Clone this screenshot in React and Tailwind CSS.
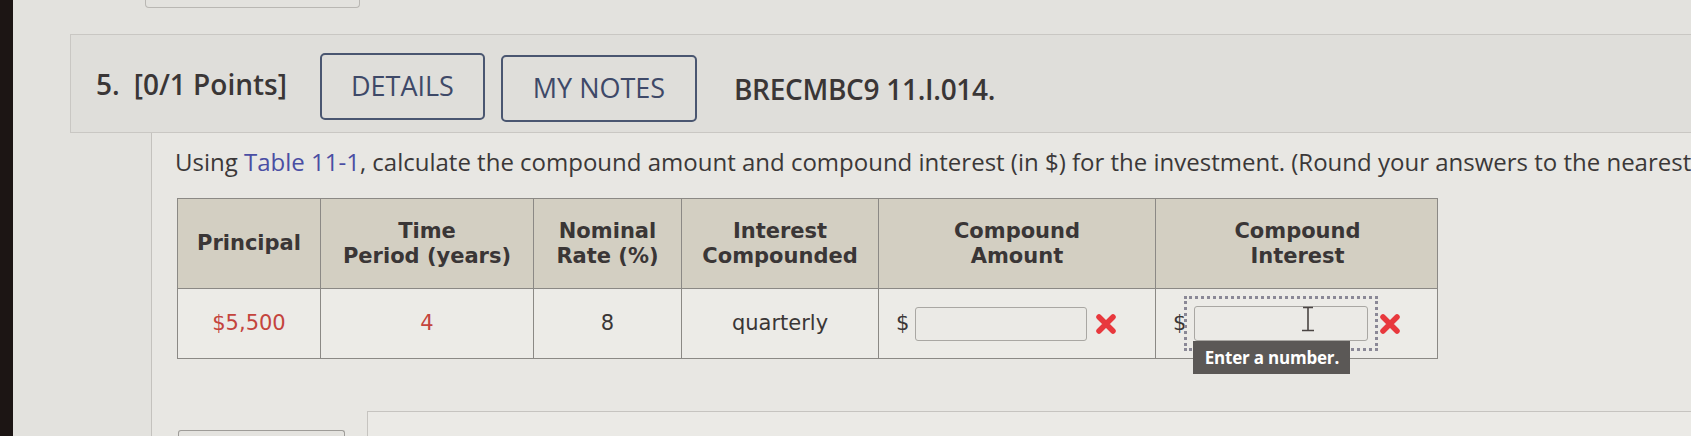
import React from 'react';

const RedX = () => (
    <svg width="24" height="24" viewBox="0 0 24 24" className="shrink-0">
        <path d="M5 5 L19 19 M19 5 L5 19" stroke="#e8383d" strokeWidth="5.5" strokeLinecap="round" />
    </svg>
);

const IBeam = () => (
    <svg width="14" height="26" viewBox="0 0 14 26" className="absolute left-[106px] top-[-1px]">
        <path d="M2 1.5 H12 M7 1.5 V24.5 M1 24.5 H13" stroke="#4a4543" strokeWidth="1.6" fill="none" />
    </svg>
);

const headers = [
    { label: ['Principal'], w: 'w-[142px]' },
    { label: ['Time', 'Period (years)'], w: 'w-[213px]' },
    { label: ['Nominal', 'Rate (%)'], w: 'w-[148px]' },
    { label: ['Interest', 'Compounded'], w: 'w-[197px]' },
    { label: ['Compound', 'Amount'], w: 'w-[277px]' },
    { label: ['Compound', 'Interest'], w: 'w-[284px]' },
];

export default function App() {
    return (
        <div className="relative flex h-[436px] w-[1691px] overflow-hidden bg-[#e3e2de] font-['Open_Sans',sans-serif]">
            {/* dark edge of the monitor */}
            <div className="w-[13px] shrink-0 bg-[#1c1514]" />

            <div className="flex min-w-0 flex-1 flex-col">
                {/* TOP REMNANT */}
                <div className="h-[34px] shrink-0">
                    <div className="ml-[132px] h-[8px] w-[215px] rounded-b-[4px] border-x border-b border-[#b9b7b3]" />
                </div>

                {/* QUESTION HEADER */}
                <div className="ml-[57px] flex h-[99px] shrink-0 items-center border-y border-l border-[#c9c7c3] bg-[#dfdeda] pl-[25px] text-[#3a3636]">
                    <span className="text-[28px] font-semibold">5.</span>
                    <span className="ml-[14px] text-[28px] font-semibold">[0/1 Points]</span>
                    <button className="ml-[33px] mt-[6px] flex h-[67px] w-[165px] items-center justify-center rounded-[5px] border-2 border-[#4a5670] text-[27px] text-[#3e4968]">
                        DETAILS
                    </button>
                    <button className="ml-[16px] mt-[10px] flex h-[67px] w-[196px] items-center justify-center rounded-[5px] border-2 border-[#4a5670] text-[27px] text-[#3e4968]">
                        MY NOTES
                    </button>
                    <span className="ml-[37px] mt-[10px] text-[28px] font-semibold tracking-[-0.3px]">BRECMBC9 11.I.014.</span>
                </div>

                {/* BODY */}
                <div className="flex min-h-0 flex-1">
                    <div className="w-[138px] shrink-0" />
                    <div className="flex min-w-0 flex-1 flex-col border-l border-[#c4c2be] bg-[#e8e7e3] pl-[23px] pt-[13px]">
                        <p className="whitespace-nowrap text-[24px] leading-[32px] text-[#3b3838]">
                            Using <span className="text-[#4a4ea3]">Table 11-1</span>, calculate the compound amount and compound interest (in $) for the investment. (Round your answers to the nearest cent.)
                        </p>

                        {/* TABLE */}
                        <div className="ml-[2px] mt-[20px] w-[1261px] border-[1.5px] border-[#8b8985] font-['DejaVu_Sans',sans-serif] text-[#3a3636]">
                            <div className="flex h-[89px] bg-[#d3cfc2]">
                                {headers.map((h, i) => (
                                    <div
                                        key={i}
                                        className={`${h.w} flex shrink-0 flex-col items-center justify-center border-[#8b8985] text-center text-[21px] font-bold leading-[25px] ${i > 0 ? 'border-l-[1.5px]' : ''}`}
                                    >
                                        {h.label.map((l) => (
                                            <span key={l}>{l}</span>
                                        ))}
                                    </div>
                                ))}
                            </div>
                            <div className="flex h-[70px] border-t-[1.5px] border-[#8b8985] bg-[#ecebe7] text-[21px]">
                                <div className="flex w-[142px] shrink-0 items-center justify-center text-[#c4443d]">$5,500</div>
                                <div className="flex w-[213px] shrink-0 items-center justify-center border-l-[1.5px] border-[#8b8985] text-[#c4443d]">4</div>
                                <div className="flex w-[148px] shrink-0 items-center justify-center border-l-[1.5px] border-[#8b8985]">8</div>
                                <div className="flex w-[197px] shrink-0 items-center justify-center border-l-[1.5px] border-[#8b8985]">quarterly</div>

                                {/* compound amount */}
                                <div className="flex w-[277px] shrink-0 items-center border-l-[1.5px] border-[#8b8985] pl-[17px]">
                                    <span>$</span>
                                    <div className="ml-[6px] h-[34px] w-[172px] rounded-[3px] border-[1.5px] border-[#a9a7a3] bg-[#ebeae6]" />
                                    <span className="ml-[7px]"><RedX /></span>
                                </div>

                                {/* compound interest, focused */}
                                <div className="flex w-[284px] shrink-0 items-center border-l-[1.5px] border-[#8b8985] pl-[17px]">
                                    <span>$</span>
                                    <div className="relative ml-[8px] h-[35px] w-[174px] rounded-[3px] border-[1.5px] border-[#a9a7a3] bg-[#ebeae6]">
                                        <div className="absolute -left-[11px] -right-[11px] -top-[11px] -bottom-[11px] border-[3px] border-dotted border-[#8a8896]" />
                                        <IBeam />
                                        <div className="absolute left-[-2px] top-[34px] z-10 flex h-[33px] w-[157px] items-center justify-center bg-[#5b5856] font-['Open_Sans',sans-serif] text-[17px] font-bold tracking-[-0.2px] text-white">
                                            Enter a number.
                                        </div>
                                    </div>
                                    <span className="ml-[10px]"><RedX /></span>
                                </div>
                            </div>
                        </div>

                        {/* BOTTOM REMNANTS */}
                        <div className="mt-[52px] flex items-start">
                            <div className="ml-[3px] mt-[19px] h-[20px] w-[167px] shrink-0 rounded-t-[3px] border-x border-t border-[#9e9c98] bg-[#e4e3df]" />
                            <div className="ml-[22px] h-[40px] flex-1 border-l border-t border-[#c6c4c0] bg-[#ebeae6]" />
                        </div>
                    </div>
                </div>
            </div>
        </div>
    );
}
